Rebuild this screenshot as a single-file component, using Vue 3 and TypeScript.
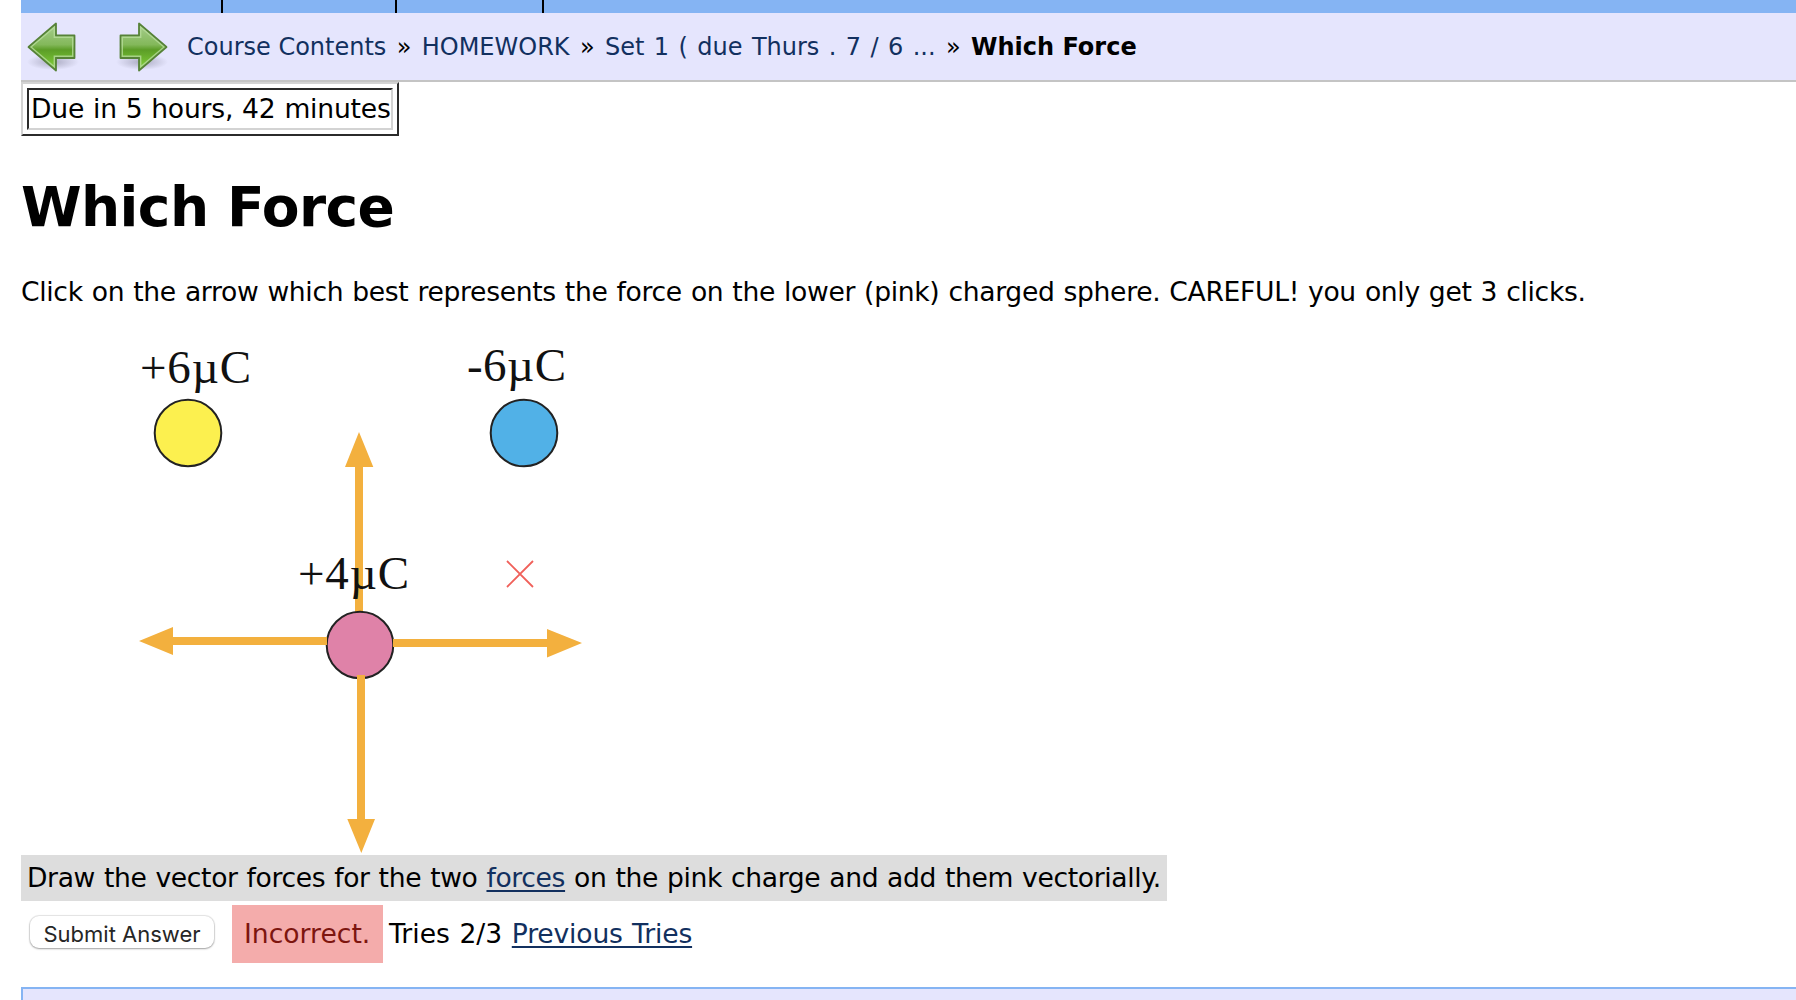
<template>
  <div class="page">
    <div class="menu-strip">
      <span class="menu-cell courses"></span>
      <span class="menu-cell tools"></span>
      <span class="menu-cell notes"></span>
    </div>

    <nav class="breadcrumbs">
      <svg
        v-for="dir in directions"
        :key="dir"
        class="nav-arrow"
        :class="dir"
        viewBox="0 0 56 58"
      >
        <defs>
          <linearGradient :id="'fill-' + dir" x1="0" y1="0" x2="0" y2="1">
            <stop offset="0" stop-color="#a9cf91" />
            <stop offset="0.45" stop-color="#83b85a" />
            <stop offset="0.56" stop-color="#5c9d27" />
            <stop offset="1" stop-color="#86d53c" />
          </linearGradient>
          <radialGradient :id="'shade-' + dir">
            <stop offset="0" stop-color="#55556a" stop-opacity="0.4" />
            <stop offset="1" stop-color="#55556a" stop-opacity="0" />
          </radialGradient>
        </defs>
        <ellipse cx="29" cy="44" rx="26" ry="8" :fill="`url(#shade-${dir})`" />
        <path
          d="M4.500 29 L32 5.500 V17.500 H50.500 V40 H32 V52.500 Z"
          :fill="`url(#fill-${dir})`"
          stroke="#568238"
          stroke-width="1.800"
          stroke-linejoin="round"
        />
        <path
          d="M7 29 L30.300 9.300 V19.300 H48.700 V38.200 H30.300 V48.700 Z"
          fill="none"
          stroke="#b6dc9b"
          stroke-width="1.400"
          stroke-opacity="0.8"
        />
      </svg>
      <span class="crumbs">
        <template v-for="item in crumbs" :key="item">
          <a>{{ item }}</a><span class="sep"> » </span>
        </template>
        <b>{{ title }}</b>
      </span>
    </nav>

    <div class="due-table">
      <div class="due-cell"><span>Due in 5 hours, 42 minutes</span></div>
    </div>

    <h1>{{ title }}</h1>
    <p class="question">
      <span>Click on the arrow which best represents the force on the lower (pink) charged sphere. CAREFUL! you only get 3 clicks.</span>
    </p>

    <!-- charge diagram -->
    <svg class="diagram" viewBox="21 330 600 525">
      <g stroke="#222" stroke-width="2">
        <circle cx="188" cy="433" r="33.300" fill="#fcf04f" />
        <circle cx="524" cy="433" r="33.300" fill="#51b1e7" />
      </g>
      <path d="M355 612 V467 H345 L359 432 L373.300 467 H363 V612 Z" fill="#f3b03e" />
      <circle cx="360" cy="645" r="33.300" fill="#df82a8" stroke="#222" stroke-width="2" />
      <g fill="#f3b03e">
        <path d="M327 637 V645 H173 V655 L139 641 L173 627 V637 Z" />
        <path d="M393 639 H547 V629 L582 643 L547 657.500 V647 H393 Z" />
        <path d="M357 675 H365 V819 H375 L361.300 853 L347.300 819 H357 Z" />
      </g>
      <g class="charge">
        <text
          v-for="c in charges"
          :key="c.text"
          :x="c.x"
          :y="c.y"
          :textLength="c.width"
        >{{ c.text }}</text>
      </g>
      <path d="M507 561 L533 587 M533 561 L507 587" stroke="#f0605a" stroke-width="1.800" />
    </svg>

    <div class="hint">
      <span>Draw the vector forces for the two <a>forces</a> on the pink charge and add them vectorially.</span>
    </div>

    <div class="answer-row">
      <button type="button">Submit Answer</button>
      <span class="incorrect">Incorrect.</span>
      <span class="tries">Tries 2/3 <a>Previous Tries</a></span>
    </div>

    <div class="discussion"></div>
  </div>
</template>

<script setup lang="ts">
interface Charge {
  text: string;
  x: number;
  y: number;
  width: number;
}

const title = "Which Force";
const directions = ["back", "forward"];
const crumbs = ["Course Contents", "HOMEWORK", "Set 1 ( due Thurs . 7 / 6 ..."];

const charges: Charge[] = [
  { text: "+6µC", x: 140, y: 383, width: 111 },
  { text: "-6µC", x: 467, y: 381, width: 99 },
  { text: "+4µC", x: 298, y: 589, width: 111 },
];
</script>

<style>
body {
  background: #fff;
  overflow: hidden;
}
</style>

<style scoped>
.page {
  box-sizing: border-box;
  height: 1000px;
  padding-left: 21px;
  overflow: hidden;
  display: flex;
  flex-direction: column;
  font-family: Verdana, "DejaVu Sans", sans-serif;
  font-size: 26.6px;
  color: #000;
  white-space: nowrap;
}

.page > * {
  flex-shrink: 0;
}

a {
  color: #12305f;
}

.menu-strip {
  display: flex;
  height: 13px;
  background: #85b4f3;
}

.menu-cell {
  box-sizing: border-box;
  border-right: 2px solid #000;
}

.courses {
  width: 202px;
}

.tools {
  width: 174px;
}

.notes {
  width: 147px;
}

.breadcrumbs {
  display: flex;
  align-items: center;
  height: 67px;
  border-bottom: 2px solid #c4c4c4;
  background: #e5e5fd;
}

.nav-arrow {
  width: 56px;
  height: 58px;
  margin-left: 3px;
}

.nav-arrow.forward {
  margin-left: 35px;
  transform: scaleX(-1);
}

.crumbs {
  margin-left: 16px;
  padding-top: 2px;
  font-size: 24px;
  line-height: 65px;
}

.crumbs a:nth-of-type(3) {
  word-spacing: 1.8px;
}

.sep {
  word-spacing: 2.7px;
}

.due-table {
  box-sizing: border-box;
  width: 378px;
  height: 54px;
  padding: 4px;
  border: 2px solid;
  border-color: #d3d3d3 #2b2b2b #2b2b2b #d3d3d3;
}

.due-cell {
  box-sizing: border-box;
  height: 42px;
  padding-left: 2px;
  border: 2px solid;
  border-color: #2b2b2b #d3d3d3 #d3d3d3 #2b2b2b;
  line-height: 37px;
  letter-spacing: -0.2px;
  word-spacing: 0.6px;
}

h1 {
  margin: 39px 0 0;
  font-size: 55px;
  line-height: 64px;
  letter-spacing: -0.6px;
}

.question {
  margin: 33px 0 0;
  height: 58px;
  line-height: 40px;
  letter-spacing: -0.33px;
  word-spacing: 0.9px;
}

.diagram {
  width: 600px;
  height: 525px;
}

.charge {
  font-family: "Liberation Serif", "Times New Roman", serif;
  font-size: 47px;
  fill: #111;
}

.hint {
  box-sizing: border-box;
  width: 1146px;
  height: 46px;
  padding-left: 6px;
  background: #ddd;
  line-height: 45px;
  letter-spacing: -0.37px;
  word-spacing: 0.9px;
}

.hint a,
.tries a {
  text-decoration: underline;
  text-decoration-thickness: 2px;
  text-underline-offset: 3px;
}

.answer-row {
  display: flex;
  align-items: center;
  height: 58px;
  margin-top: 4px;
}

button {
  width: 184px;
  height: 32px;
  margin: -4px 0 0 9px;
  padding: 3px 0 0;
  border: 0;
  border-radius: 9px;
  background: #fff;
  box-shadow: 0 0 1px 1px rgba(0, 0, 0, 0.1), 0 1px 2px rgba(0, 0, 0, 0.3);
  font-family: Inter, sans-serif;
  font-size: 22px;
  color: #262626;
}

.incorrect {
  box-sizing: border-box;
  width: 151px;
  height: 58px;
  margin-left: 18px;
  padding-left: 12px;
  background: #f4acab;
  color: #7d150f;
  line-height: 57px;
}

.tries {
  margin-left: 6px;
  line-height: 56px;
  word-spacing: 1.1px;
}

.tries a {
  letter-spacing: -0.18px;
}

.discussion {
  height: 40px;
  margin-top: 24px;
  border: 2px solid #85b4f3;
  border-right: 0;
  background: #e5e5fd;
}
</style>
